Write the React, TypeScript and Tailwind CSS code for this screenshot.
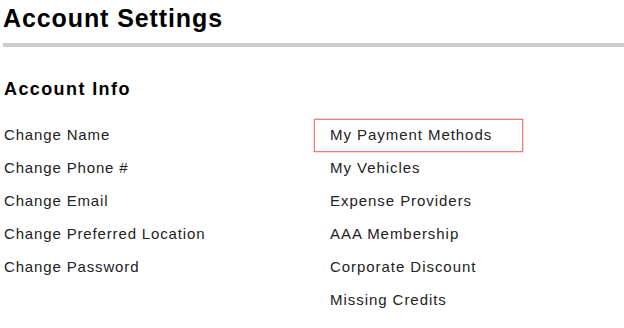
import React from "react";

const left = ["Change Name", "Change Phone #", "Change Email", "Change Preferred Location", "Change Password"];
const right = ["My Payment Methods", "My Vehicles", "Expense Providers", "AAA Membership", "Corporate Discount", "Missing Credits"];

export default function App() {
  return (
    <div className="w-[624px] h-[328px] bg-white overflow-hidden text-[#1a1a1a]" style={{ fontFamily: '"Liberation Sans", Arial, sans-serif' }}>
      <div className="pl-[3px] pt-[3px]">
        <h1 className="text-[25px] leading-[30px] font-bold text-black tracking-[0.9px]">Account Settings</h1>
        <div className="mt-[10px] h-[4px] bg-[#cccccc]" />
      </div>
      <h2 className="pl-[4px] mt-[31px] text-[18px] leading-[22px] font-bold text-black tracking-[1.4px]">Account Info</h2>
      <div className="mt-[19px] flex">
        <ul className="w-[314px] pl-[4px]">
          {left.map((t) => (
            <li key={t} className="h-[33px] flex items-center text-[15px] tracking-[0.85px] text-[#222]">{t}</li>
          ))}
        </ul>
        <ul className="w-[209px]">
          {right.map((t, i) => (
            <li
              key={t}
              className={
                "h-[33px] flex items-center pl-[15px] text-[15px] tracking-[0.95px] text-[#222] " +
                (i === 0 ? "border border-[#f07a7a] shadow-[0_0_0_0.5px_#f9b0b0]" : "border border-transparent")
              }
            >
              {t}
            </li>
          ))}
        </ul>
      </div>
    </div>
  );
}
